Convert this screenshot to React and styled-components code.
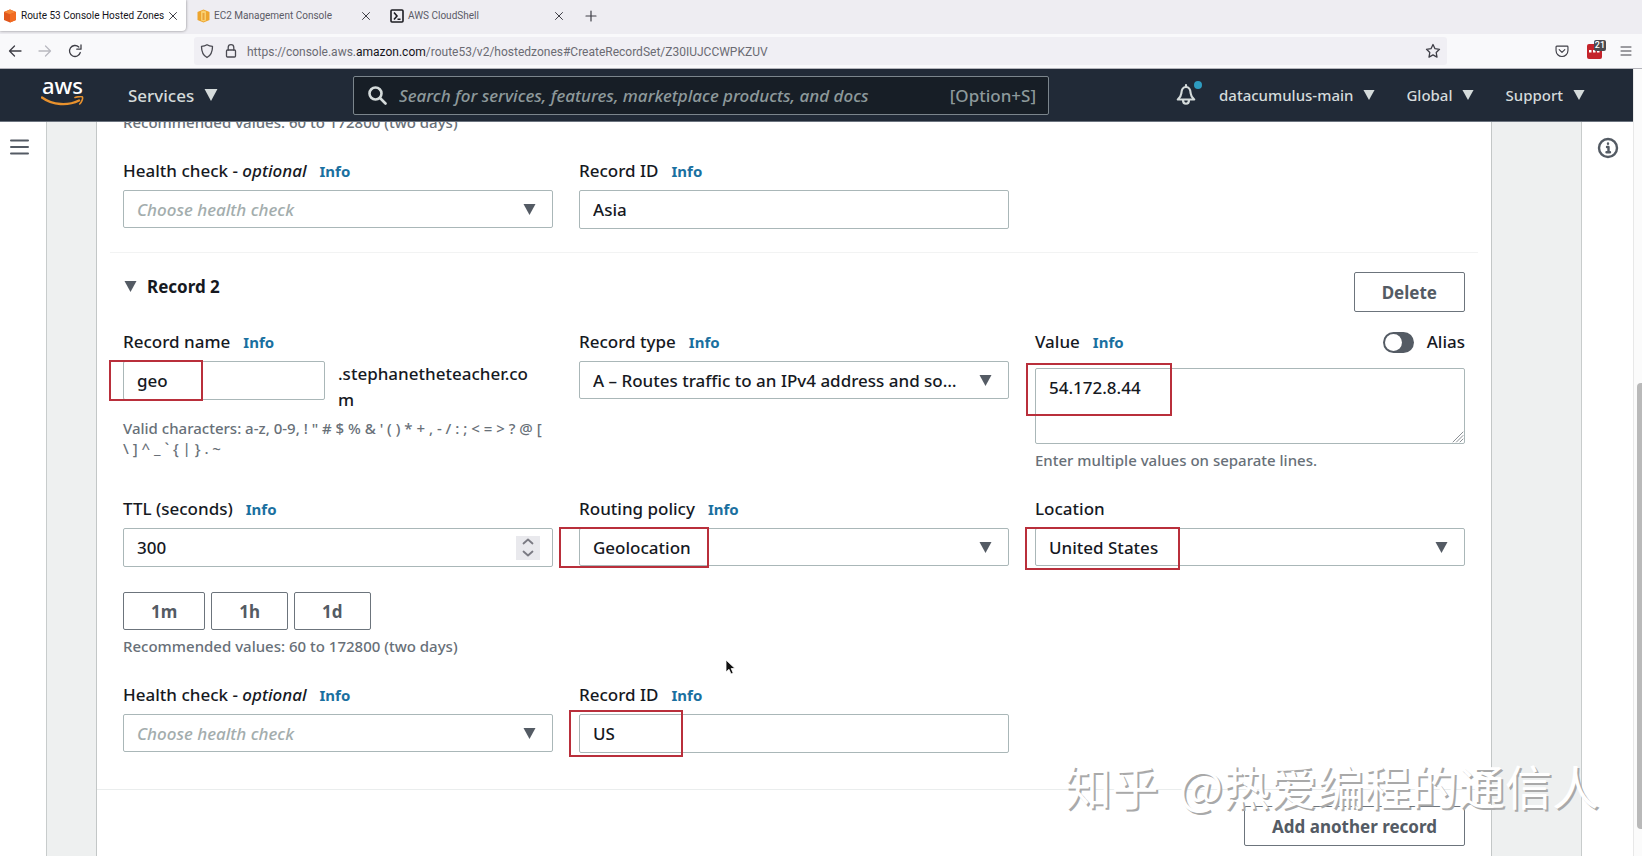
import React from "react";
import styled, { createGlobalStyle } from "styled-components";

const ui = `"Noto Sans", "Open Sans", "Noto Sans CJK SC", sans-serif`;
const chromeFont = `Roboto, "Liberation Sans", sans-serif`;

const GlobalStyle = createGlobalStyle`
  *, *::before, *::after { box-sizing: border-box; }
  html, body, #root { height: 100%; }
  body { margin: 0; overflow: hidden; font-family: ${ui}; font-size: 17px; color: #16191f; background: #fff; }
  button, input, select, textarea { font: inherit; color: inherit; margin: 0; }
  button { cursor: pointer; }
  svg { display: block; flex: none; }
`;

/* ---------- frame ---------- */
const Window = styled.div`
  position: relative;
  display: flex;
  flex-direction: column;
  height: 100vh;
  overflow: hidden;
`;
const TabStrip = styled.div`
  display: flex;
  height: 34px;
  flex: none;
  background: #eeedf2;
  font-family: ${chromeFont};
  font-size: 10px;
`;
const Tab = styled.div`
  display: flex;
  align-items: center;
  gap: 4px;
  width: ${(p) => (p.$active ? 186 : 193)}px;
  height: 31px;
  padding: 0 8px 0 ${(p) => (p.$active ? 3 : 11)}px;
  color: ${(p) => (p.$active ? "#15141a" : "#5b5b66")};
  background: ${(p) => (p.$active ? "#fff" : "transparent")};
  border-radius: 0 0 4px 0;
  box-shadow: ${(p) => (p.$active ? "0 0 3px rgba(0,0,0,.45)" : "none")};
`;
const TabTitle = styled.span`
  flex: 1;
  min-width: 0;
  white-space: nowrap;
`;
const BareButton = styled.button`
  display: flex;
  align-items: center;
  justify-content: center;
  border: 0;
  padding: 0;
  background: none;
  color: ${(p) => p.$tone || "#3e3e46"};
`;
const NewTab = styled(BareButton)`
  width: 38px;
  height: 31px;
`;
const Toolbar = styled.div`
  display: flex;
  align-items: center;
  flex: none;
  height: 35px;
  padding: 0 10px 0 7px;
  background: #f9f9fb;
  border-bottom: 1px solid #b4b4bb;
`;
const NavButtons = styled.div`
  display: flex;
  gap: 14px;
  width: 187px;
`;
const AddressBar = styled.div`
  display: flex;
  align-items: center;
  gap: 8px;
  flex: 1;
  height: 28px;
  padding: 0 6px 0 5px;
  border-radius: 3px;
  background: #f0eff4;
  color: #4a4a52;
`;
const Url = styled.div`
  flex: 1;
  font-family: ${chromeFont};
  font-size: 12px;
  padding-top: 1px;
  color: #6b6b73;
  b { font-weight: 400; color: #15141a; }
`;
const ToolbarEnd = styled.div`
  display: flex;
  align-items: center;
  justify-content: space-between;
  width: 77px;
  margin-left: 108px;
`;
const Extension = styled.div`
  position: relative;
  width: 15px;
  height: 15px;
  border-radius: 2px;
  background: #c4242b;
  color: #fff;
  display: flex;
  align-items: center;
  justify-content: center;
`;
const Badge = styled.span`
  position: absolute;
  top: -4px;
  right: -4px;
  padding: 0 1px;
  border-radius: 2px;
  background: #4a4a4f;
  color: #fff;
  font-family: ${chromeFont};
  font-size: 9px;
  font-weight: 500;
  line-height: 11px;
`;

/* ---------- console ---------- */
const Viewport = styled.div`
  display: flex;
  flex: 1;
  min-height: 0;
`;
const Console = styled.div`
  display: flex;
  flex-direction: column;
  flex: 1;
  min-width: 0;
`;
const ScrollTrack = styled.div`
  display: flex;
  justify-content: flex-end;
  width: 9px;
  padding-top: 314px;
  border-left: 1px solid #e8e8e8;
  background: #fbfbfb;
`;
const ScrollThumb = styled.div`
  width: 5px;
  height: 446px;
  border-radius: 4px 0 0 4px;
  background: #b9b9b9;
`;
const Header = styled.header`
  position: relative;
  z-index: 1;
  display: flex;
  align-items: center;
  flex: none;
  height: 53px;
  padding: 0 48px 0 41px;
  border-bottom: 1px solid #6b737e;
  background: #212a37;
  color: #d5dbdb;
`;
const Logo = styled.a`
  display: flex;
  flex-direction: column;
  align-items: center;
  gap: 3px;
  width: 43px;
  color: #fff;
  text-decoration: none;
  font-size: 22px;
  font-weight: 500;
  line-height: 16px;
  padding-bottom: 5px;
`;
const MenuButton = styled(BareButton)`
  gap: 10px;
  color: #d5dbdb;
  font-size: ${(p) => (p.$large ? 17 : 15)}px;
  font-weight: 500;
  white-space: nowrap;
`;
const ServicesSlot = styled.div`
  width: 269px;
  padding-left: 44px;
`;
const Search = styled.label`
  display: flex;
  align-items: center;
  gap: 12px;
  flex: 1;
  height: 39px;
  padding: 0 12px 0 13px;
  border: 1px solid #7b858c;
  border-radius: 2px;
  background: #171e26;
  font-weight: 500;
  input {
    flex: 1;
    min-width: 0;
    padding: 0;
    border: 0;
    outline: 0;
    background: none;
    font-style: italic;
  }
  input::placeholder { color: #8d999b; opacity: 1; }
`;
const Shortcut = styled.span`
  color: #8d999b;
`;
const HeaderEnd = styled.nav`
  display: flex;
  align-items: center;
  gap: 31px;
  margin-left: 127px;
`;
const Bell = styled(BareButton)`
  position: relative;
  margin-right: -8px;
  color: #d5dbdb;
  &::after {
    content: "";
    position: absolute;
    top: -3px;
    right: -6px;
    width: 8px;
    height: 8px;
    border-radius: 50%;
    background: #2e9cc0;
  }
`;
const Body = styled.div`
  display: flex;
  flex: 1;
  min-height: 0;
`;
const SideRail = styled.div`
  display: flex;
  justify-content: center;
  align-items: flex-start;
  flex: none;
  width: ${(p) => (p.$right ? 52 : 47)}px;
  padding: ${(p) => (p.$right ? "15px 0 0" : "17px 8px 0 0")};
  border: 0 solid #c8cccc;
  border-width: ${(p) => (p.$right ? "0 0 0 1px" : "0 1px 0 0")};
`;
const Main = styled.main`
  flex: 1;
  min-width: 0;
  overflow: hidden;
  padding: 0 89px 0 49px;
  background: #eef0f0;
`;
const Card = styled.section`
  min-height: 100%;
  border: 1px solid #c3c7c7;
  border-width: 0 1px;
  background: #fff;
`;
const RecordBlock = styled.div`
  margin: 0 13px;
  padding: 0 13px 23px;
  display: flex;
  flex-direction: column;
  gap: 26px;
  border-bottom: 1px solid #f2f3f3;
`;
const ScrolledBlock = styled(RecordBlock)`
  margin-top: -10px;
`;
const LastBlock = styled(RecordBlock)`
  padding: 19px 13px 36px;
  border-bottom: 0;
`;
const CardFooter = styled.div`
  display: flex;
  justify-content: flex-end;
  padding: 16px 26px;
  border-top: 1px solid #eaeded;
`;
const RecordHead = styled.div`
  display: flex;
  justify-content: space-between;
  align-items: flex-start;
  margin-bottom: -9px;
`;
const RecordToggle = styled(BareButton)`
  gap: 10px;
  height: 28px;
  padding-left: 1px;
  color: #545b64;
  h2 { margin: 0; font-size: 17px; font-weight: 700; color: #16191f; }
`;
const Columns = styled.div`
  display: grid;
  grid-template-columns: repeat(3, minmax(0, 1fr));
  gap: 26px;
`;
const Field = styled.div`
  display: flex;
  flex-direction: column;
  gap: 6px;
`;
const LabelRow = styled.div`
  display: flex;
  align-items: center;
  gap: 13px;
  line-height: 26px;
  font-weight: 500;
  margin-bottom: ${(p) => (p.$roomy ? 7 : 0)}px;
`;
const InfoLink = styled.a`
  color: #1a70a0;
  font-size: 15px;
  font-weight: 700;
  text-decoration: none;
`;
const Hint = styled.p`
  margin: 0;
  padding-right: 8px;
  color: #687078;
  font-size: 15px;
  font-weight: 500;
  line-height: 20px;
`;
const Control = styled.div`
  position: relative;
  display: flex;
  align-items: center;
  height: ${(p) => (p.$select ? 38 : 39)}px;
  border: 1px solid #aab7b8;
  border-radius: 2px;
  background: #fff;
  font-weight: 500;
  input, select {
    flex: 1;
    width: 100%;
    min-width: 0;
    height: 100%;
    padding: 0 12px 0 13px;
    border: 0;
    outline: 0;
    background: none;
    appearance: none;
  }
  select {
    padding-right: 42px;
    text-overflow: ellipsis;
    ${(p) => p.$empty && "color: #a3adad; font-style: italic;"}
  }
  input[type="number"] { appearance: textfield; }
  input::-webkit-inner-spin-button { display: none; }
`;
const SelectArrow = styled.span`
  position: absolute;
  right: 16px;
  color: #545b64;
  pointer-events: none;
`;
const Stepper = styled.div`
  display: flex;
  flex-direction: column;
  flex: none;
  width: 24px;
  height: 24px;
  margin-right: 12px;
  background: #e9e9ed;
  button { flex: 1; }
`;
const NameRow = styled.div`
  display: grid;
  grid-template-columns: 202px 1fr;
  gap: 13px;
  align-items: start;
  margin-bottom: -1px;
  span {
    padding-right: 13px;
    font-weight: 500;
    line-height: 26px;
    overflow-wrap: anywhere;
  }
`;
const ValueBox = styled.div`
  position: relative;
  display: flex;
  textarea {
    width: 100%;
    height: 76px;
    padding: 6px 13px;
    border: 1px solid #aab7b8;
    border-radius: 2px;
    outline: 0;
    font-weight: 500;
    line-height: 26px;
    resize: none;
  }
  svg { position: absolute; right: 1px; bottom: 1px; color: #8a8f94; }
`;
const AliasSwitch = styled.label`
  display: flex;
  align-items: center;
  gap: 13px;
  margin-left: auto;
  input {
    appearance: none;
    display: flex;
    width: 31px;
    height: 21px;
    margin: 0;
    padding: 2px;
    border-radius: 11px;
    background: #545b64;
  }
  input::before {
    content: "";
    width: 17px;
    height: 17px;
    border-radius: 50%;
    background: #fff;
  }
`;
const Button = styled.button`
  height: ${(p) => (p.$small ? 38 : 40)}px;
  padding: 0 27px;
  border: 1px solid #6c747c;
  border-radius: 2px;
  background: #fff;
  color: #545b64;
  font-weight: 700;
`;
const ButtonRow = styled.div`
  display: flex;
  gap: 6px;
  margin-top: 19px;
`;
const Highlight = styled.span`
  position: absolute;
  z-index: 2;
  top: ${(p) => p.$top}px;
  left: ${(p) => p.$left}px;
  width: ${(p) => p.$width}px;
  height: ${(p) => p.$height}px;
  border: 2px solid #b92f3b;
  pointer-events: none;
`;
const Pointer = styled.svg`
  position: absolute;
  left: 725px;
  top: 659px;
`;
const Watermark = styled.div`
  position: absolute;
  right: 43px;
  bottom: 36px;
  z-index: 3;
  display: flex;
  gap: 20px;
  color: #fff;
  font-family: "Noto Sans CJK SC", sans-serif;
  font-size: 47px;
  line-height: 70px;
  white-space: nowrap;
  text-shadow: 2px 2px 0 #a9a9a9;
  pointer-events: none;
`;

/* ---------- icons ---------- */
const Caret = ({ size = 13 }) => (
  <svg width={size} height={size} viewBox="0 0 13 13" aria-hidden="true">
    <path d="M0.5 1h12L6.5 12z" fill="currentColor" />
  </svg>
);
const Line = ({ w = 16, h = 16, box = "0 0 16 16", sw = 1.3, children }) => (
  <svg width={w} height={h} viewBox={box} fill="none" stroke="currentColor" strokeWidth={sw} strokeLinecap="round" strokeLinejoin="round" aria-hidden="true">
    {children}
  </svg>
);
const Close = () => (
  <Line w={10} h={10} box="0 0 10 10" sw={1}><path d="M1.5 1.5l7 7M8.5 1.5l-7 7" /></Line>
);
const Cube = ({ light, mid, dark }) => (
  <svg width="14" height="14" viewBox="0 0 14 14" aria-hidden="true">
    <path d="M7 0.5L13 3v8l-6 2.5L1 11V3z" fill={mid} />
    <path d="M7 0.5L13 3 7 5.2 1 3z" fill={light} />
    <path d="M7 5.2L13 3v8l-6 2.5z" fill={dark} />
  </svg>
);
const Ec2Icon = () => (
  <svg width="13" height="14" viewBox="0 0 13 14" aria-hidden="true">
    <path d="M0.5 3L6.5 0.5 12.5 3v8l-6 2.5-6-2.5z" fill="#eda52f" />
    <path d="M4 2.5l2.5-1L9 2.5v9l-2.5 1-2.5-1z" fill="#f9cf6e" />
    <path d="M5.5 4h2v7h-2z" fill="#e9a23a" />
  </svg>
);
const ShellIcon = () => (
  <svg width="14" height="14" viewBox="0 0 14 14" fill="none" stroke="#1c1c22" aria-hidden="true">
    <rect x="1" y="1" width="12" height="12" rx="1" strokeWidth="1.6" />
    <path d="M4 3.5L7 7l-3 3.5M7.5 10.3h3" strokeWidth="1.6" />
  </svg>
);

/* ---------- form pieces ---------- */
const Label = ({ id, children, info = true, roomy, extra }) => (
  <LabelRow $roomy={roomy}>
    <label htmlFor={id}>{children}</label>
    {info && <InfoLink href="#info">Info</InfoLink>}
    {extra}
  </LabelRow>
);
const Select = ({ id, value, empty, children }) => (
  <Control $select $empty={empty}>
    <select id={id} defaultValue={value}><option value={value}>{value}</option></select>
    <SelectArrow><Caret /></SelectArrow>
    {children}
  </Control>
);
const TextInput = ({ id, value, children }) => (
  <Control>
    <input id={id} type="text" defaultValue={value} />
    {children}
  </Control>
);
const HealthAndId = ({ prefix, recordId, mark }) => (
  <Columns>
    <Field>
      <Label id={prefix + "-health"}>Health check - <em>optional</em></Label>
      <Select id={prefix + "-health"} value="Choose health check" empty />
    </Field>
    <Field>
      <Label id={prefix + "-id"}>Record ID</Label>
      <TextInput id={prefix + "-id"} value={recordId}>{mark}</TextInput>
    </Field>
  </Columns>
);

export default function App() {
  return (
    <Window>
      <GlobalStyle />
      <TabStrip>
        <Tab $active>
          <Cube light="#f58536" mid="#e0561b" dark="#f26b21" />
          <TabTitle>Route 53 Console Hosted Zones</TabTitle>
          <BareButton aria-label="Close tab"><Close /></BareButton>
        </Tab>
        <Tab>
          <Ec2Icon />
          <TabTitle>EC2 Management Console</TabTitle>
          <BareButton aria-label="Close tab"><Close /></BareButton>
        </Tab>
        <Tab>
          <ShellIcon />
          <TabTitle>AWS CloudShell</TabTitle>
          <BareButton aria-label="Close tab"><Close /></BareButton>
        </Tab>
        <NewTab aria-label="New tab"><Line w={12} h={12} box="0 0 12 12" sw={1.2}><path d="M6 1v10M1 6h10" /></Line></NewTab>
      </TabStrip>

      <Toolbar>
        <NavButtons>
          <BareButton aria-label="Back"><Line><path d="M14 8H2.5M7.5 3L2.5 8l5 5" /></Line></BareButton>
          <BareButton aria-label="Forward" $tone="#b9b9c0"><Line><path d="M2 8h11.5M8.5 3l5 5-5 5" /></Line></BareButton>
          <BareButton aria-label="Reload"><Line><path d="M13.3 9.5A5.5 5.5 0 1 1 11.8 4M14 2v4.2H9.8" /></Line></BareButton>
        </NavButtons>
        <AddressBar>
          <Line><path d="M8 1.7c2 1.3 3.8 1.6 5.5 1.7 0 5.2-1.3 8.8-5.5 11.1C3.8 12.2 2.5 8.6 2.5 3.4 4.2 3.3 6 3 8 1.7z" /></Line>
          <Line><rect x="3.5" y="7" width="9" height="7" rx="1" /><path d="M5.2 7V4.500a2.800 2.800 0 0 1 5.600 0V7" /></Line>
          <Url>https://console.aws.<b>amazon.com</b>/route53/v2/hostedzones#CreateRecordSet/Z30IUJCCWPKZUV</Url>
          <BareButton aria-label="Bookmark"><Line><path d="M8 1.5l2 4.200 4.500.600-3.300 3.200.8 4.600L8 11.900l-4 2.200.8-4.600L1.500 6.300 6 5.700z" /></Line></BareButton>
        </AddressBar>
        <ToolbarEnd>
          <BareButton aria-label="Save to Pocket"><Line w={14} h={14}><path d="M2 2.500h12a.8.8 0 0 1 .8.8V7.500a6.800 6.800 0 0 1-13.600 0V3.300a.8.800 0 0 1 .8-.8zM4.800 6.500L8 9.600l3.200-3.100" /></Line></BareButton>
          <Extension>
            <svg width="11" height="3" viewBox="0 0 11 3" aria-hidden="true"><path d="M0 0h2.500v2.500H0zM4 0h2.500v2.500H4zM8 0h2.500v2.500H8z" fill="#fff" /></svg>
            <Badge>21</Badge>
          </Extension>
          <BareButton aria-label="Menu"><Line w={12} h={12} box="0 0 12 12" sw={1}><path d="M1 2h10M1 6h10M1 10h10" /></Line></BareButton>
        </ToolbarEnd>
      </Toolbar>

      <Viewport>
        <Console>
          <Header>
            <Logo href="#home">
              aws
              <svg width="43" height="12" viewBox="0 0 43 12" fill="none" aria-hidden="true">
                <path d="M1 1.500C12 9.500 27 10 38 4.500" stroke="#e8912d" strokeWidth="2.400" strokeLinecap="round" />
                <path d="M34 1.500c3-1 7-1.300 7.500-.3.500 1.200-.8 5-2.800 6.800" stroke="#e8912d" strokeWidth="1.600" strokeLinecap="round" />
              </svg>
            </Logo>
            <ServicesSlot><MenuButton $large>Services <Caret size={14} /></MenuButton></ServicesSlot>
            <Search>
              <Line w={20} h={20} box="0 0 20 20" sw={2.6}><circle cx="8.500" cy="8.500" r="6" /><path d="M13.500 13.500l5 5" /></Line>
              <input type="search" aria-label="Search" placeholder="Search for services, features, marketplace products, and docs" />
              <Shortcut>[Option+S]</Shortcut>
            </Search>
            <HeaderEnd>
              <Bell aria-label="Notifications">
                <Line w={20} h={22} box="0 0 20 22" sw={2.2}><path d="M10 3c-3.500 0-4.500 3-4.700 6.500C5.100 12 4 13.500 1.800 15.500h16.400C16 13.500 14.900 12 14.700 9.500 14.500 6 13.500 3 10 3zM10 3V1.200M7 16c0 5 6 5 6 0" /></Line>
              </Bell>
              <MenuButton>datacumulus-main <Caret size={12} /></MenuButton>
              <MenuButton>Global <Caret size={12} /></MenuButton>
              <MenuButton>Support <Caret size={12} /></MenuButton>
            </HeaderEnd>
          </Header>

          <Body>
            <SideRail>
              <BareButton aria-label="Open navigation" $tone="#545b64">
                <Line w={19} h={16} box="0 0 19 16" sw={2}><path d="M1 1.500h17M1 8h17M1 14.500h17" /></Line>
              </BareButton>
            </SideRail>
            <Main>
              <Card>
                <ScrolledBlock>
                  <Hint>Recommended values: 60 to 172800 (two days)</Hint>
                  <HealthAndId prefix="r1" recordId="Asia" />
                </ScrolledBlock>

                <LastBlock>
                  <RecordHead>
                    <RecordToggle><Caret /><h2>Record 2</h2></RecordToggle>
                    <Button>Delete</Button>
                  </RecordHead>

                  <Columns>
                    <Field>
                      <Label id="name">Record name</Label>
                      <NameRow>
                        <TextInput id="name" value="geo"><Highlight $left={-15} $top={-2} $width={94} $height={41} /></TextInput>
                        <span>.stephanetheteacher.com</span>
                      </NameRow>
                      <Hint>{"Valid characters: a-z, 0-9, ! \" # $ % & ' ( ) * + , - / : ; < = > ? @ [ \\ ] ^ _ ` { | } . ~"}</Hint>
                    </Field>
                    <Field>
                      <Label id="type">Record type</Label>
                      <Select id="type" value="A – Routes traffic to an IPv4 address and some AWS resources" />
                    </Field>
                    <Field>
                      <Label id="value" roomy extra={<AliasSwitch><input type="checkbox" role="switch" />Alias</AliasSwitch>}>Value</Label>
                      <ValueBox>
                        <textarea id="value" defaultValue="54.172.8.44" />
                        <Line w={12} h={12} box="0 0 12 12" sw={1}><path d="M1 11L11 1M4.500 11L11 4.500M8 11l3-3" /></Line>
                        <Highlight $left={-9} $top={-5} $width={146} $height={53} />
                      </ValueBox>
                      <Hint>Enter multiple values on separate lines.</Hint>
                    </Field>
                  </Columns>

                  <Columns>
                    <Field>
                      <Label id="ttl">TTL (seconds)</Label>
                      <Control>
                        <input id="ttl" type="number" defaultValue="300" />
                        <Stepper>
                          <BareButton aria-label="Increase" $tone="#7b7b83"><Line w={12} h={7} box="0 0 12 7" sw={1.8}><path d="M1.500 5.500L6 1.500l4.500 4" /></Line></BareButton>
                          <BareButton aria-label="Decrease" $tone="#7b7b83"><Line w={12} h={7} box="0 0 12 7" sw={1.8}><path d="M1.500 1.500L6 5.500l4.500-4" /></Line></BareButton>
                        </Stepper>
                      </Control>
                      <ButtonRow>
                        <Button $small>1m</Button>
                        <Button $small>1h</Button>
                        <Button $small>1d</Button>
                      </ButtonRow>
                      <Hint>Recommended values: 60 to 172800 (two days)</Hint>
                    </Field>
                    <Field>
                      <Label id="policy">Routing policy</Label>
                      <Select id="policy" value="Geolocation"><Highlight $left={-21} $top={-2} $width={150} $height={41} /></Select>
                    </Field>
                    <Field>
                      <Label id="location" info={false}>Location</Label>
                      <Select id="location" value="United States"><Highlight $left={-11} $top={-2} $width={155} $height={43} /></Select>
                    </Field>
                  </Columns>

                  <HealthAndId prefix="r2" recordId="US" mark={<Highlight $left={-11} $top={-5} $width={114} $height={47} />} />
                </LastBlock>

                <CardFooter>
                  <Button>Add another record</Button>
                </CardFooter>
              </Card>
            </Main>
            <SideRail $right>
              <BareButton aria-label="Open help" $tone="#545b64">
                <Line w={22} h={22} box="0 0 22 22" sw={2.4}><circle cx="11" cy="11" r="9" /><path d="M10 10h1.500v5M9.500 15.300h3.500M11 6.500v.2" /></Line>
              </BareButton>
            </SideRail>
          </Body>
        </Console>
        <ScrollTrack><ScrollThumb /></ScrollTrack>
      </Viewport>

      <Pointer width="12" height="18" viewBox="0 0 12 18" aria-hidden="true">
        <path d="M1 1v12l3-2.700 2 4.700 2.200-1-2-4.500H10z" fill="#111" stroke="#fff" strokeWidth="0.800" />
      </Pointer>
      <Watermark><span>知乎</span><span>@热爱编程的通信人</span></Watermark>
    </Window>
  );
}
